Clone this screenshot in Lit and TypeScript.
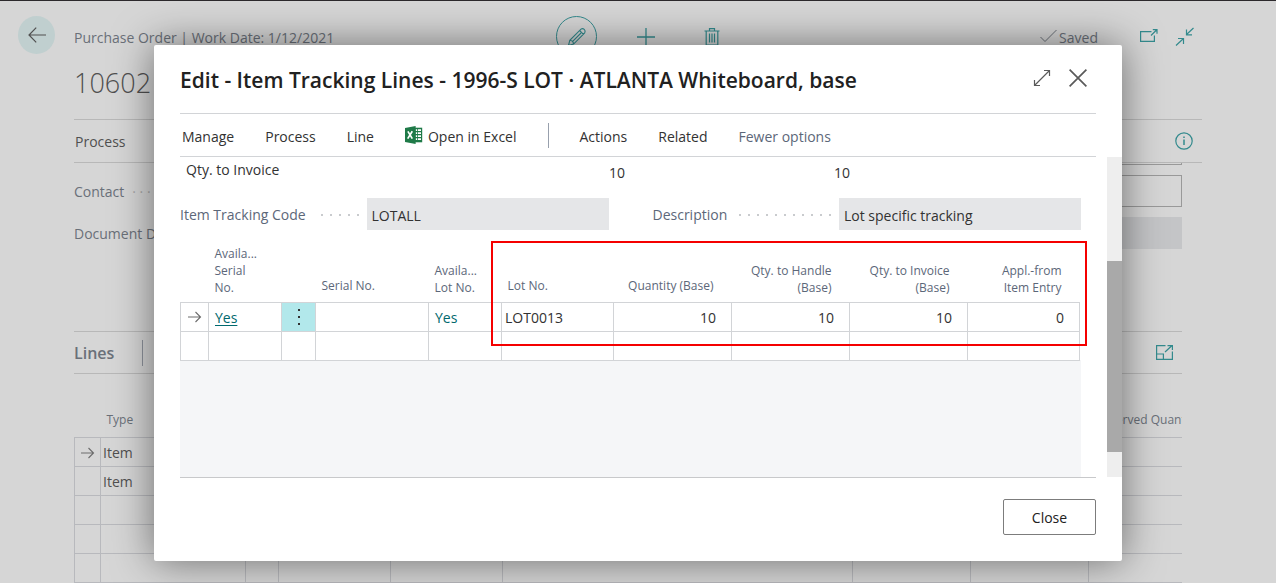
import { LitElement, html, css, svg, nothing } from "lit";
import { customElement } from "lit/decorators.js";

const fontStack = css`"Open Sans", "Noto Sans", sans-serif`;

const arrowRight = html`<svg class="row-arrow" width="14" height="12" viewBox="0 0 14 12" aria-hidden="true">
  <path d="M0 6H12.500M7.500 1l5 5-5 5" fill="none" stroke="currentColor" stroke-width="1.1" />
</svg>`;

const excelIcon = html`<svg width="18" height="18" viewBox="0 0 18 18" aria-hidden="true">
  <path d="M10 1.7h7.2v14.6H10z" fill="#1f7a48" />
  ${[3.2, 6.2, 9.2, 12.2].map(
    (y) => svg`<path d="M10.6 ${y}h1.600v1.800h-1.600zM13 ${y}h3v1.800h-3z" fill="#fff" />`
  )}
  <path d="M0 2L10.6 0v18L0 16z" fill="#1f7a48" />
  <path d="M2.9 5.4l4.4 7.2M7.3 5.2L2.7 12.6" stroke="#fff" stroke-width="1.7" fill="none" />
</svg>`;

@customElement("order-page")
export class OrderPage extends LitElement {
  static styles = css`
    :host {
      display: block;
      box-sizing: border-box;
      min-height: 100vh;
      padding: 15px 74px 0 18px;
      border-top: 1px solid #2c292c;
      background: #d6d6d6;
      color: #505050;
      font: 14px/20px ${fontStack};
    }
    button {
      display: flex;
      padding: 0;
      border: 0;
      background: none;
      color: #338a8d;
      font: inherit;
    }
    svg {
      display: block;
    }
    .top {
      display: flex;
      height: 41px;
    }
    .back {
      width: 37px;
      height: 38px;
      margin-right: 19px;
      border-radius: 50%;
      background: #c0cfcf;
      color: #505050;
      align-items: center;
      justify-content: center;
    }
    .caption {
      flex: 1;
      padding-top: 12px;
      color: #6a7079;
    }
    .tools {
      display: flex;
      gap: 40px;
      align-items: center;
      margin-left: 16px;
    }
    .pencil {
      box-sizing: border-box;
      width: 41px;
      height: 41px;
      border: 1px solid #338a8d;
      border-radius: 50%;
      align-items: center;
      justify-content: center;
    }
    .status {
      flex: 1;
      display: flex;
      justify-content: flex-end;
      align-items: flex-start;
      padding: 11px 7px 0 0;
      color: #6a7079;
    }
    .saved {
      display: flex;
      gap: 2px;
      padding-top: 1px;
      margin-right: 42px;
    }
    .status button + button {
      margin-left: 17px;
    }
    main {
      margin-left: 56px;
    }
    h1 {
      margin: 0;
      padding: 4px 0 14px;
      font-size: 27px;
      line-height: 44px;
      font-weight: 300;
    }
    .bar {
      display: flex;
      align-items: center;
      justify-content: space-between;
      height: 42px;
      padding: 0 9px 0 1px;
      border: solid #b8b8b8;
      border-width: 1px 0;
    }
    .bar button:first-child {
      padding-top: 2px;
      color: #505050;
    }
    .body {
      margin-right: 20px;
    }
    .field {
      display: flex;
      align-items: center;
      height: 32px;
      margin-bottom: 10px;
      color: #6a7079;
    }
    .clipped {
      height: 1px;
      margin: 0 0 10px 50%;
      border: 1px solid #999;
      border-top: 0;
    }
    .field label {
      flex: 1;
      padding-top: 2px;
      white-space: nowrap;
    }
    .field input {
      flex: 1;
      box-sizing: border-box;
      height: 32px;
      border: 1px solid #999;
      background: none;
    }
    .field .filled {
      border: 0;
      background: #c4c5c7;
    }
    .leader {
      margin-left: 8px;
      color: #a6a6a6;
    }
    .lines-head {
      display: flex;
      align-items: center;
      justify-content: space-between;
      height: 41px;
      margin-top: 82px;
      padding-right: 9px;
      border: solid #b8b8b8;
      border-width: 1px 0;
    }
    h2 {
      margin: 0;
      padding-right: 28px;
      border-right: 1px solid #8d929b;
      color: #6a7079;
      font-size: 16px;
      line-height: 26px;
      font-weight: 600;
    }
    .scroll {
      overflow: hidden;
    }
    table {
      width: 100%;
      border-collapse: collapse;
      table-layout: fixed;
    }
    th {
      height: 63px;
      box-sizing: border-box;
      padding: 28px 0 0 6px;
      color: #6a7079;
      font-size: 12px;
      font-weight: 400;
      line-height: 17px;
      text-align: left;
      white-space: nowrap;
    }
    th:last-child {
      padding-left: 8px;
    }
    td {
      box-sizing: border-box;
      height: 29px;
      padding: 2px 2px 0;
      border: 1px solid #b8b9bd;
    }
    td:last-child {
      border-right: 0;
    }
    .row-arrow {
      margin: 0 auto;
      color: #6c6c6c;
    }
  `;

  render() {
    const widths = [26, 145, 33, 112, 112, 0, 118, 118, 94];
    const rows = ["Item", "Item", "", "", ""];
    return html`
      <header class="top">
        <button class="back" aria-label="Back">
          <svg width="18" height="16" viewBox="0 0 18 16">
            <path d="M18 8H1M8.2 0.6L1 8l7.2 7.4" fill="none" stroke="currentColor" stroke-width="1.2" />
          </svg>
        </button>
        <div class="caption">Purchase Order | Work Date: 1/12/2021</div>
        <div class="tools">
          <button class="pencil" aria-label="Edit">
            <svg width="20" height="20" viewBox="0 0 20 20" fill="none" stroke="currentColor" stroke-width="1.1">
              <path d="M1.5 18.5l1.3-5.2L14 2.1c2.2-1.6 5.2 1.3 3.7 3.8L6.6 17.1zM12.6 3.5l3.8 3.8M2.8 13.3c2.2.2 3.6 1.600 3.800 3.800M14 6L5.200 14.800" />
            </svg>
          </button>
          <button aria-label="New">
            <svg width="18" height="18" viewBox="0 0 18 18" fill="none" stroke="currentColor" stroke-width="1.3">
              <path d="M9 0v18M0 9h18" />
            </svg>
          </button>
          <button aria-label="Delete">
            <svg width="34" height="18" viewBox="-10 0 34 18" fill="none" stroke="currentColor" stroke-width="1.2">
              <path d="M-.5 3h15M4.500 3V.7h5V3M1.200 3v14h11.600V3M4.500 5.500v9M7 5.500v9M9.500 5.500v9" />
            </svg>
          </button>
        </div>
        <div class="status">
          <span class="saved">
            <svg width="17" height="18" viewBox="0 0 17 18" fill="none" stroke="currentColor">
              <path d="M.5 9L5 13.500L16.500 2" />
            </svg>
            Saved
          </span>
          <button aria-label="Open in new window">
            <svg width="18" height="18" viewBox="0 0 18 18" fill="none" stroke="currentColor" stroke-width="1.200">
              <path d="M11.500 4.600H.6v9.800h13.800V8.500M11 8.500L16.500 3M12.800 2.600H17v4.200" />
            </svg>
          </button>
          <button aria-label="Collapse">
            <svg width="20" height="20" viewBox="0 0 20 20" fill="none" stroke="currentColor" stroke-width="1.200">
              <path d="M18.500 1l-7 6.500M11.500 2.500v5.300H17M1 18.500l7.500-7M3 11.500h5.500V17" />
            </svg>
          </button>
        </div>
      </header>
      <main>
        <h1>10602</h1>
        <nav class="bar">
          <button>Process</button>
          <button aria-label="Details">
            <svg width="18" height="18" viewBox="0 0 18 18" fill="none" stroke="currentColor" stroke-width="1.200">
              <circle cx="9" cy="9" r="8.200" />
              <path d="M9 7.500V13M9 4.500v1.500" stroke-width="1.500" />
            </svg>
          </button>
        </nav>
        <div class="body">
          <div class="clipped"></div>
          <div class="field">
            <label for="contact">Contact<span class="leader">· · · ·</span></label>
            <input id="contact" />
          </div>
          <div class="field">
            <label for="doc">Document Date</label>
            <input id="doc" class="filled" readonly />
          </div>
          <section>
            <div class="lines-head">
              <h2>Lines</h2>
              <button aria-label="Expand lines">
                <svg width="17" height="15" viewBox="0 0 17 15" fill="none" stroke="currentColor" stroke-width="1.200">
                  <path d="M9.500.6H.6v13.800h15.800V6.500M.6 9h6.800v5.400M9 7L15.500 1M11.500.6h4.900v4.500" />
                </svg>
              </button>
            </div>
            <div class="scroll">
              <table>
                <colgroup>
                  ${widths.map((w) => (w ? html`<col style="width:${w}px" />` : html`<col />`))}
                </colgroup>
                <thead>
                  <tr>
                    <th></th>
                    <th>Type</th>
                    <th colspan="6"></th>
                    <th>Reserved Quantity</th>
                  </tr>
                </thead>
                <tbody>
                  ${rows.map(
                    (type, i) => html`<tr>
                      <td>${i === 0 ? arrowRight : nothing}</td>
                      <td>${type}</td>
                      ${widths.slice(2).map(() => html`<td></td>`)}
                    </tr>`
                  )}
                </tbody>
              </table>
            </div>
          </section>
        </div>
      </main>
    `;
  }
}

interface Column {
  lines: string[];
  width?: number;
  kind: "plain" | "link" | "text" | "number";
  value?: string;
}

const columns: Column[] = [
  { lines: ["Availa...", "Serial", "No."], width: 73, kind: "link", value: "Yes" },
  { lines: [], width: 34, kind: "plain" },
  { lines: ["Serial No."], kind: "text", value: "" },
  { lines: ["Availa...", "Lot No."], width: 73, kind: "link", value: "Yes" },
  { lines: ["Lot No."], width: 112, kind: "text", value: "LOT0013" },
  { lines: ["Quantity (Base)"], width: 118, kind: "number", value: "10" },
  { lines: ["Qty. to Handle", "(Base)"], width: 118, kind: "number", value: "10" },
  { lines: ["Qty. to Invoice", "(Base)"], width: 118, kind: "number", value: "10" },
  { lines: ["Appl.-from", "Item Entry"], width: 112, kind: "number", value: "0" },
];

@customElement("tracking-dialog")
export class TrackingDialog extends LitElement {
  static styles = css`
    :host {
      display: flex;
      flex-direction: column;
      box-sizing: border-box;
      padding: 0 26px 26px;
      border-radius: 2px;
      background: #fff;
      box-shadow: 0 0 40px rgba(0, 0, 0, 0.5);
      color: #323232;
      font: 14px/20px ${fontStack};
    }
    svg {
      display: block;
    }
    button {
      padding: 0;
      border: 0;
      background: none;
      color: inherit;
      font: inherit;
      white-space: nowrap;
    }
    .title {
      display: flex;
      align-items: center;
      gap: 18px;
      height: 66px;
      padding: 0 9px 2px 0;
      color: #5a5a5a;
    }
    h1 {
      flex: 1;
      margin: 0;
      padding-top: 4px;
      color: #212121;
      font-size: 21px;
      line-height: 28px;
      font-weight: 600;
    }
    .menu {
      display: flex;
      align-items: center;
      gap: 31px;
      height: 42px;
      padding-left: 2px;
      border: solid #d2d4d7;
      border-width: 1px 0;
    }
    .menu button {
      display: flex;
      align-items: center;
      gap: 5px;
      padding-top: 3px;
    }
    .menu svg {
      margin-bottom: 3px;
    }
    .menu .fewer {
      color: #5c6779;
    }
    .divider {
      width: 1px;
      height: 25px;
      background: #98a0ad;
    }
    .scroll {
      display: flex;
      justify-content: space-between;
      margin-right: -26px;
    }
    .content {
      position: relative;
      flex: 1;
      display: flex;
      flex-direction: column;
      margin-right: 26px;
    }
    .track {
      width: 15px;
      padding-top: 104px;
      box-sizing: border-box;
      background: #eee;
    }
    .thumb {
      height: 191px;
      background: #a9a9a9;
    }
    .totals {
      display: grid;
      grid-template-columns: 1fr 225px 225px 231px;
      padding: 1px 0 14px 6px;
      line-height: 23px;
    }
    .totals span + span {
      padding-top: 3px;
      text-align: right;
    }
    .fields {
      display: grid;
      grid-template-columns: 1fr 1fr;
      gap: 44px;
    }
    .field {
      display: flex;
      align-items: center;
      color: #5c6779;
    }
    .field label {
      flex: 1;
      display: flex;
      align-items: center;
      gap: 9px;
      padding-top: 2px;
      white-space: nowrap;
    }
    .dots {
      flex: 1;
      height: 2px;
      margin-right: 8px;
      background: repeating-linear-gradient(to left, #c9cbce 0 2px, transparent 2px 9px);
    }
    .field input {
      width: 242px;
      height: 32px;
      box-sizing: border-box;
      padding: 2px 5px 0;
      border: 0;
      border-radius: 0;
      background: #e5e6e8;
      color: #323232;
      font: inherit;
    }
    .grid {
      padding-bottom: 116px;
      margin-top: 11px;
      background: linear-gradient(#f5f6f8, #f5f6f8) bottom / 100% 117px no-repeat;
    }
    table {
      width: calc(100% - 1px);
      border-collapse: collapse;
      table-layout: fixed;
    }
    th {
      height: 61px;
      box-sizing: border-box;
      padding: 0 6px 6px;
      color: #5c6779;
      font-size: 12px;
      line-height: 17px;
      font-weight: 400;
      text-align: left;
      vertical-align: bottom;
      white-space: nowrap;
    }
    th.single {
      padding-bottom: 8px;
    }
    th.number {
      padding-right: 18px;
      text-align: right;
    }
    th span {
      display: block;
    }
    td {
      height: 29px;
      box-sizing: border-box;
      padding: 3px 3px 0;
      border: 1px solid #d2d4d7;
      background: #fff;
    }
    td.number {
      padding-right: 15px;
      text-align: right;
    }
    td.link {
      padding-left: 6px;
    }
    td.icon {
      padding: 0;
    }
    td.selected {
      background: #b2e8eb;
    }
    td a {
      color: #00696e;
      text-decoration: none;
    }
    td a.current {
      text-decoration: underline;
      text-underline-offset: 2px;
    }
    td button {
      display: flex;
      width: 100%;
      justify-content: center;
    }
    .row-arrow {
      margin: 0 auto;
      color: #6c6c6c;
    }
    .highlight {
      position: absolute;
      top: 84px;
      right: -6px;
      width: 592px;
      height: 101px;
      border: 2px solid #f50000;
      pointer-events: none;
    }
    footer {
      display: flex;
      justify-content: flex-end;
      padding-top: 21px;
      border-top: 1px solid #c8c9cb;
    }
    .close {
      width: 93px;
      height: 36px;
      padding-top: 2px;
      border: 1px solid #7c7c7c;
      border-radius: 2px;
      color: #212121;
      font-weight: 500;
    }
  `;

  private cell(c: Column, index: number) {
    if (c.kind === "plain") {
      return html`<td class="icon selected">
        <button aria-label="Row menu">
          <svg width="4" height="18" viewBox="0 0 4 18" fill="#323232">
            <path d="M1 1h2v2H1zM1 8h2v2H1zM1 15h2v2H1z" />
          </svg>
        </button>
      </td>`;
    }
    if (c.kind === "link") {
      return html`<td class="link"><a href="#" class=${index === 0 ? "current" : ""}>${c.value}</a></td>`;
    }
    return html`<td class=${c.kind}>${c.value}</td>`;
  }

  render() {
    return html`
      <header class="title">
        <h1>Edit - Item Tracking Lines - 1996-S LOT · ATLANTA Whiteboard, base</h1>
        <button aria-label="Expand">
          <svg width="18" height="18" viewBox="0 0 18 18" fill="none" stroke="currentColor" stroke-width="1.200">
            <path d="M1.500 16.500l15-15M11 1.500h5.500V7M1.500 11v5.500H7" />
          </svg>
        </button>
        <button aria-label="Close dialog">
          <svg width="18" height="18" viewBox="0 0 18 18" fill="none" stroke="currentColor" stroke-width="1.700">
            <path d="M.6.6l16.800 16.800M17.400.6L.6 17.400" />
          </svg>
        </button>
      </header>
      <nav class="menu">
        <button>Manage</button>
        <button>Process</button>
        <button>Line</button>
        <button>${excelIcon}Open in Excel</button>
        <span class="divider"></span>
        <button>Actions</button>
        <button>Related</button>
        <button class="fewer">Fewer options</button>
      </nav>
      <div class="scroll">
        <div class="content">
          <div class="totals">
            <span>Qty. to Invoice</span>
            <span>10</span>
            <span>10</span>
          </div>
          <div class="fields">
            <div class="field">
              <label for="code">Item Tracking Code<span class="dots"></span></label>
              <input id="code" readonly value="LOTALL" />
            </div>
            <div class="field">
              <label for="description">Description<span class="dots"></span></label>
              <input id="description" readonly value="Lot specific tracking" />
            </div>
          </div>
          <div class="grid">
            <table>
              <colgroup>
                <col style="width:28px" />
                ${columns.map((c) => (c.width ? html`<col style="width:${c.width}px" />` : html`<col />`))}
              </colgroup>
              <thead>
                <tr>
                  <th></th>
                  ${columns.map(
                    (c) => html`<th class="${c.kind} ${c.lines.length === 1 ? "single" : ""}">
                      ${c.lines.map((line) => html`<span>${line}</span>`)}
                    </th>`
                  )}
                </tr>
              </thead>
              <tbody>
                <tr>
                  <td class="icon">${arrowRight}</td>
                  ${columns.map((c, i) => this.cell(c, i))}
                </tr>
                <tr>
                  <td></td>
                  ${columns.map(() => html`<td></td>`)}
                </tr>
              </tbody>
            </table>
          </div>
          <div class="highlight"></div>
        </div>
        <div class="track"><div class="thumb"></div></div>
      </div>
      <footer><button class="close">Close</button></footer>
    `;
  }
}

@customElement("app-root")
export class AppRoot extends LitElement {
  static styles = css`
    :host {
      display: block;
      position: relative;
      height: 100vh;
      overflow: hidden;
    }
    .dialog {
      position: absolute;
      top: 45px;
      left: 154px;
      right: 154px;
    }
  `;

  render() {
    return html`
      <order-page></order-page>
      <tracking-dialog class="dialog" role="dialog" aria-label="Item Tracking Lines"></tracking-dialog>
    `;
  }
}
